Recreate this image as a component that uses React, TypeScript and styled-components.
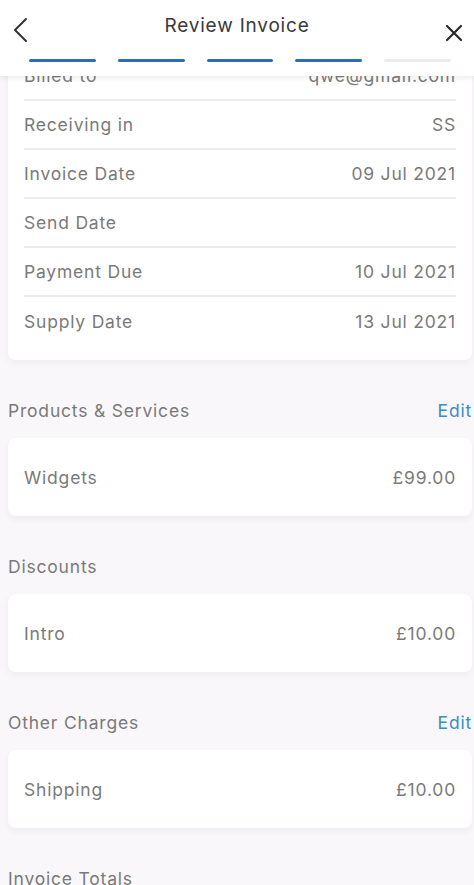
import styled, { createGlobalStyle } from 'styled-components';

const GlobalStyle = createGlobalStyle`
  html, body {
    margin: 0;
    padding: 0;
    background: #f9f7fa;
  }
  * {
    box-sizing: border-box;
  }
`;

const Screen = styled.div`
  width: 474px;
  height: 885px;
  overflow: hidden;
  display: flex;
  flex-direction: column;
  background: #f9f7fa;
  font-family: Inter, 'Noto Sans', sans-serif;
  color: #7a7a7a;
  letter-spacing: 0.8px;
`;

const Header = styled.header`
  position: relative;
  z-index: 2;
  flex: 0 0 76px;
  background: #fff;
  box-shadow: 0 2px 6px rgba(0, 0, 0, 0.08);
  display: flex;
  flex-direction: column;
`;

const TitleBar = styled.div`
  height: 52px;
  display: flex;
  align-items: flex-start;
  justify-content: space-between;
  padding: 0 10px 0 12px;
`;

const IconButton = styled.button<{ $top: number }>`
  border: 0;
  background: none;
  padding: 0;
  margin-top: ${(p) => p.$top}px;
  display: flex;
  color: #333;
  cursor: pointer;
`;

const Title = styled.h1`
  margin: 14px 0 0;
  font-size: 19px;
  font-weight: 400;
  color: #3a3a3a;
  letter-spacing: 0.8px;
`;

const Steps = styled.div`
  display: flex;
  gap: 22px;
  padding: 7px 23px 0 29px;
`;

const Step = styled.span<{ $done: boolean }>`
  flex: 1;
  height: 3px;
  border-radius: 2px;
  background: ${(p) => (p.$done ? '#2e6db5' : '#ececec')};
`;

const Content = styled.main`
  flex: 1;
  overflow: hidden;
  padding: 0 2px 0 8px;
`;

const Card = styled.section<{ $shift?: number }>`
  background: #fff;
  border-radius: 8px;
  box-shadow: 0 3px 8px rgba(0, 0, 0, 0.05);
  padding: 0 16px;
  margin-top: ${(p) => p.$shift ?? 0}px;
`;

const DetailsCard = styled(Card)`
  padding-bottom: 14px;
`;

const Row = styled.div<{ $height: number; $divider?: boolean }>`
  height: ${(p) => p.$height}px;
  display: flex;
  align-items: center;
  justify-content: space-between;
  font-size: 17.5px;
  color: #7a7a7a;
  border-bottom: ${(p) => (p.$divider ? '2px solid #ececec' : '0')};
`;

const SectionHead = styled.div`
  height: 28px;
  margin: 36px 0 14px;
  display: flex;
  align-items: center;
  justify-content: space-between;
  font-size: 17.5px;
  color: #7a7a7a;
`;

const EditLink = styled.a`
  color: #3a8cc3;
  font-size: 17.5px;
  text-decoration: none;
  cursor: pointer;
`;

const details = [
  ['Billed to', 'qwe@gmail.com'],
  ['Receiving in', 'SS'],
  ['Invoice Date', '09 Jul 2021'],
  ['Send Date', ''],
  ['Payment Due', '10 Jul 2021'],
  ['Supply Date', '13 Jul 2021'],
];

const sections = [
  { title: 'Products & Services', edit: true, name: 'Widgets', amount: '£99.00' },
  { title: 'Discounts', edit: false, name: 'Intro', amount: '£10.00' },
  { title: 'Other Charges', edit: true, name: 'Shipping', amount: '£10.00' },
];

const App = () => {
  return (
    <>
      <GlobalStyle />
      <Screen>
        <Header>
          <TitleBar>
            <IconButton $top={17} aria-label='Back'>
              <svg width='18' height='26' viewBox='0 0 18 26' fill='none'>
                <polyline
                  points='14,2 3,13 14,24'
                  stroke='#333'
                  strokeWidth='2'
                  strokeLinecap='round'
                  strokeLinejoin='round'
                />
              </svg>
            </IconButton>
            <Title>Review Invoice</Title>
            <IconButton $top={23} aria-label='Close'>
              <svg width='20' height='20' viewBox='0 0 20 20' fill='none'>
                <path
                  d='M3 3 L17 17 M17 3 L3 17'
                  stroke='#2a2a2a'
                  strokeWidth='2.2'
                  strokeLinecap='round'
                />
              </svg>
            </IconButton>
          </TitleBar>
          <Steps>
            {[true, true, true, true, false].map((done, i) => (
              <Step key={i} $done={done} />
            ))}
          </Steps>
        </Header>

        <Content>
          <DetailsCard $shift={-24}>
            {details.map(([label, value], i) => (
              <Row key={label} $height={49} $divider={i < details.length - 1}>
                <span>{label}</span>
                <span>{value}</span>
              </Row>
            ))}
          </DetailsCard>

          {sections.map((s) => (
            <div key={s.title}>
              <SectionHead>
                <span>{s.title}</span>
                {s.edit && <EditLink>Edit</EditLink>}
              </SectionHead>
              <Card>
                <Row $height={78}>
                  <span>{s.name}</span>
                  <span>{s.amount}</span>
                </Row>
              </Card>
            </div>
          ))}

          <SectionHead>
            <span>Invoice Totals</span>
          </SectionHead>
        </Content>
      </Screen>
    </>
  );
};

export default App;
